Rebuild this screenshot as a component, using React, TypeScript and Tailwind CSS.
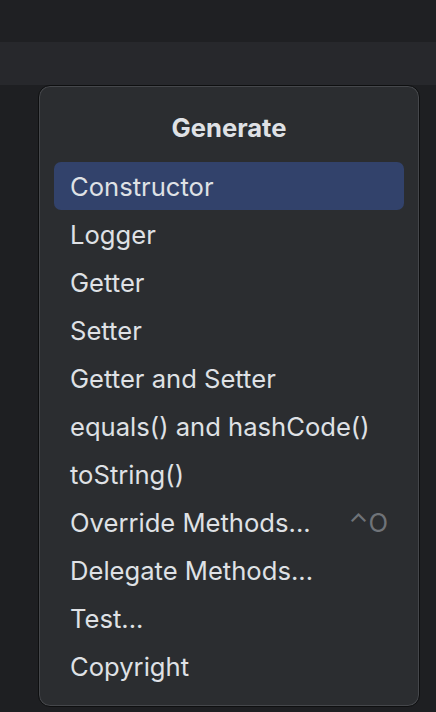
const items: { label: string; shortcut?: string; active?: boolean }[] = [
  { label: "Constructor", active: true },
  { label: "Logger" },
  { label: "Getter" },
  { label: "Setter" },
  { label: "Getter and Setter" },
  { label: "equals() and hashCode()" },
  { label: "toString()" },
  { label: "Override Methods...", shortcut: "⌃O" },
  { label: "Delegate Methods..." },
  { label: "Test..." },
  { label: "Copyright" },
];

export default function App() {
  return (
    <div
      className="h-[712px] w-[436px] overflow-hidden bg-[#1e1f22] text-[#dfe1e5]"
      style={{ fontFamily: "Inter, 'Noto Sans', sans-serif" }}
    >
      <div className="h-[42px] bg-[#1f2023]" />
      <div className="h-[43px] bg-[#27282c]" />
      <div className="pl-[38px]">
        <div className="w-[382px] rounded-[12px] border border-[#0e0f10] bg-[#2b2d30] shadow-[inset_0_0_0_1px_#45474b]">
          <div className="pt-[26px] pb-[19px] text-center text-[25.6px] font-bold leading-[31px] text-[#dfe1e5]">
            Generate
          </div>
          <div className="px-[15px] pb-[16px]">
            {items.map((item) => (
              <div
                key={item.label}
                className={
                  item.active
                    ? "flex h-[48px] items-center justify-between rounded-[7px] bg-[#32426b] px-[16px]"
                    : "flex h-[48px] items-center justify-between px-[16px]"
                }
              >
                <span className="text-[25.6px] leading-[31px]">{item.label}</span>
                {item.shortcut && (
                  <span className="text-[25.6px] leading-[31px] text-[#6f7378]">{item.shortcut}</span>
                )}
              </div>
            ))}
          </div>
        </div>
      </div>
    </div>
  );
}
